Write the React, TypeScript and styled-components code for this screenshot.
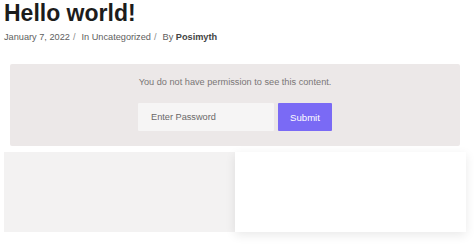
import styled, { createGlobalStyle } from 'styled-components';

const GlobalStyle = createGlobalStyle`
  html, body {
    margin: 0;
    padding: 0;
    background: #ffffff;
  }
  body {
    font-family: "Liberation Sans", Arial, sans-serif;
  }
`;

const Page = styled.div`
  width: 474px;
  height: 248px;
  box-sizing: border-box;
  padding: 1px 8px 0 4px;
  overflow: hidden;
`;

const Title = styled.h1`
  margin: 0;
  font-size: 23px;
  line-height: 24px;
  font-weight: 700;
  color: #1c1c1c;
`;

const Meta = styled.div`
  margin-top: 6px;
  font-size: 9.2px;
  line-height: 12px;
  color: #5e5e5e;
  display: flex;
`;

const Sep = styled.span`
  margin: 0 6px 0 3px;
  color: #8a8a8a;
`;

const Author = styled.b`
  font-weight: 700;
  color: #444;
`;

const Locked = styled.section`
  margin: 21px 6px 0 6px;
  height: 82px;
  border-radius: 2px;
  background: #ece8e8;
  display: flex;
  flex-direction: column;
  align-items: center;
`;

const Notice = styled.p`
  margin: 12px 0 0;
  font-size: 9.2px;
  line-height: 13px;
  color: #7a7676;
`;

const Form = styled.form`
  margin-top: 14px;
  display: flex;
  gap: 4px;
`;

const PasswordInput = styled.input`
  box-sizing: border-box;
  width: 136px;
  height: 28px;
  border: none;
  border-radius: 1px;
  background: #f6f5f5;
  padding: 0 13px;
  font-family: inherit;
  font-size: 9.2px;
  color: #444;
  outline: none;

  &::placeholder {
    color: #6a6868;
  }
`;

const SubmitButton = styled.button`
  width: 54px;
  height: 28px;
  border: none;
  border-radius: 1px;
  background: #7a6af5;
  color: #ffffff;
  font-family: inherit;
  font-size: 9.6px;
  cursor: pointer;
`;

const Cards = styled.div`
  margin-top: 6px;
  display: grid;
  grid-template-columns: 231px 231px;
  height: 80px;
`;

const Card = styled.div<{ $raised?: boolean }>`
  background: ${(p) => (p.$raised ? '#ffffff' : '#f3f2f2')};
  box-shadow: ${(p) => (p.$raised ? '0 3px 10px rgba(0, 0, 0, 0.09)' : 'none')};
  position: relative;
`;

export default function App() {
  return (
    <>
      <GlobalStyle />
      <Page>
        <Title>Hello world!</Title>
        <Meta>
          <span>January 7, 2022</span>
          <Sep>/</Sep>
          <span>In Uncategorized</span>
          <Sep>/</Sep>
          <span>
            By <Author>Posimyth</Author>
          </span>
        </Meta>
        <Locked>
          <Notice>You do not have permission to see this content.</Notice>
          <Form onSubmit={(e) => e.preventDefault()}>
            <PasswordInput type="password" placeholder="Enter Password" />
            <SubmitButton type="submit">Submit</SubmitButton>
          </Form>
        </Locked>
        <Cards>
          <Card />
          <Card $raised />
        </Cards>
      </Page>
    </>
  );
}
